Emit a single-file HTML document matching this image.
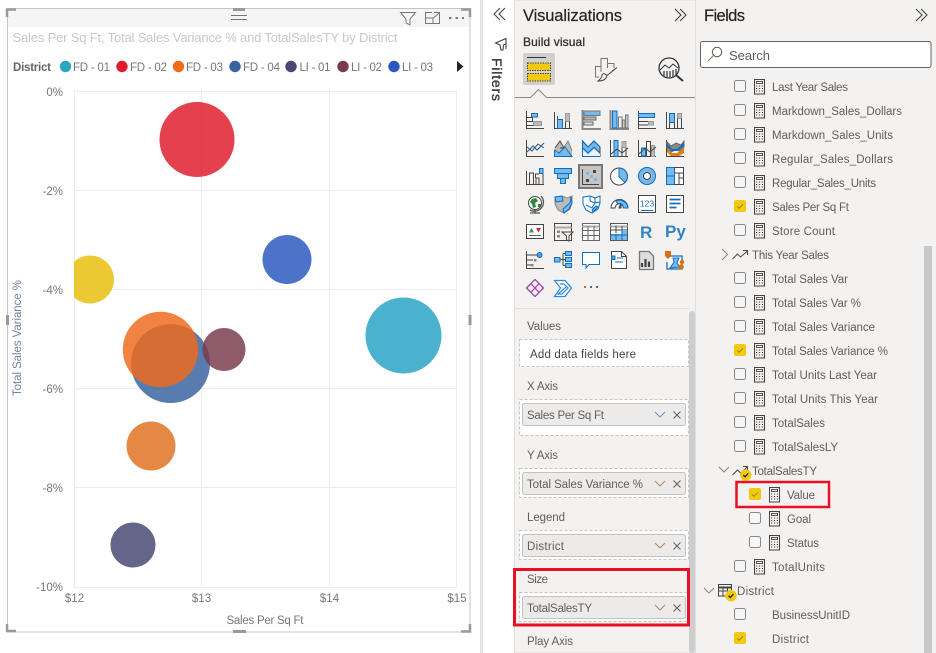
<!DOCTYPE html>
<html><head><meta charset="utf-8">
<style>
html,body{margin:0;padding:0;width:936px;height:653px;overflow:hidden;background:#fff}
svg{display:block;font-family:"Liberation Sans",sans-serif}
.f{font-size:11.5px;fill:#605e5c}
.l{font-size:11.5px;fill:#605e5c}
.t{font-size:11.5px;fill:#777}
.h{font-size:16.5px;fill:#252423;stroke:#252423;stroke-width:.2px}
</style></head><body>
<svg width="936" height="653" viewBox="0 0 936 653" xmlns="http://www.w3.org/2000/svg">
<defs>
<g id="calc" fill="none" stroke="#444"><rect x=".5" y=".5" width="10" height="14.5"/><rect x="2.500" y="2.500" width="6" height="2" stroke-width=".9"/><path d="M2 7h1.200M4.900 7h1.200M7.800 7h1.200M2 9.500h1.200M4.900 9.500h1.200M7.800 9.500h1.200M2 12h1.200M4.900 12h1.200M7.800 12h1.200" stroke-width="1.100"/></g>
<rect id="cb" x=".5" y=".5" width="11" height="11" rx="2" fill="#fff" fill-opacity=".35" stroke="#8a8886"/>
<g id="cc"><rect width="12" height="12" rx="2" fill="#f2c811"/><path d="M3 6.300l2 2 4-4" fill="none" stroke="#9a7f10" stroke-width=".9"/></g>
<g id="trend" fill="none" stroke="#444"><path d="M.5 10l5-5 3 3 7-6M11 1.500h4.500V6"/></g>
<path id="chev" d="M0 0l5 5 5-5" fill="none" stroke-width="1.100"/>
<path id="xx" d="M0 0l7 7M7 0l-7 7" fill="none" stroke="#605e5c"/>
<path id="dbl" d="M0 0l6 6-6 6M5 0l6 6-6 6" fill="none" stroke="#444" stroke-width="1.100"/>
<g id="badge"><circle r="5.700" fill="#f2c811"/><path d="M-2.500 0l1.800 1.800 3.200-3.400" fill="none" stroke="#222" stroke-width="1.300"/></g>
</defs>

<rect width="936" height="653" fill="#fff"/>
<!-- visual -->
<rect x="8" y="9" width="462" height="18" fill="#f5f5f5"/>
<rect x="7.500" y="8.500" width="462.500" height="623.500" fill="none" stroke="#c4c4c4"/>
<path d="M7 17V9.500H16M461 9.500H470V17M7 624V631H16M461 631.500H470V624" fill="none" stroke="#9a9a9a" stroke-width="2.500"/>
<path d="M233 9.500H245M233 631.500H246M7.500 315V325M470 315V325" fill="none" stroke="#999" stroke-width="3"/>
<path d="M231 15.500H247M231 19.500H247" stroke="#777" fill="none"/>
<path d="M400.500 12.500H415.500L410 19V25L406 23V19Z" fill="none" stroke="#777"/>
<path d="M432 12.500H425.500V23.500H439.500V17M425.500 18H433V23.500M434 12.500H439.500V18M439 13L433.500 18" fill="none" stroke="#777"/>
<path d="M449 18h2.500M455.500 18h2.500M462 18h2" stroke="#666" stroke-width="1.800" fill="none"/>
<text x="12.500" y="42" font-size="13" fill="#c8c8c8" textLength="385" lengthAdjust="spacing">Sales Per Sq Ft, Total Sales Variance % and TotalSalesTY by District</text>

<text x="13" y="71" font-size="11.5" font-weight="700" fill="#666" textLength="38">District</text>
<circle cx="65.500" cy="66.500" r="5.700" fill="#2aa5c3"/><text class="t" x="73" y="71" textLength="37">FD - 01</text>
<circle cx="122" cy="66.500" r="5.700" fill="#df1c2b"/><text class="t" x="130" y="71" textLength="37">FD - 02</text>
<circle cx="178.500" cy="66.500" r="5.700" fill="#f06b1d"/><text class="t" x="186" y="71" textLength="37">FD - 03</text>
<circle cx="235" cy="66.500" r="5.700" fill="#38639f"/><text class="t" x="243" y="71" textLength="37">FD - 04</text>
<circle cx="291" cy="66.500" r="5.700" fill="#474774"/><text class="t" x="299.500" y="71" textLength="31">LI - 01</text>
<circle cx="343" cy="66.500" r="5.700" fill="#7a3a4c"/><text class="t" x="351" y="71" textLength="31">LI - 02</text>
<circle cx="394" cy="66.500" r="5.700" fill="#2b57bf"/><text class="t" x="402" y="71" textLength="31">LI - 03</text>
<path d="M457 61L463.500 66.500L457 72Z" fill="#252423"/>

<!-- grid -->
<path d="M74.500 90V587.500M201.500 90V587.500M329.500 90V587.500M456.500 90V587.500M74 91.500H457M74 190.500H457M74 289.500H457M74 388.500H457M74 487.500H457M74 587.500H457" stroke="#ececec" fill="none"/>
<g text-anchor="end" class="t">
<text class="t" x="63" y="96">0%</text><text class="t" x="63" y="195">-2%</text><text class="t" x="63" y="294">-4%</text><text class="t" x="63" y="393">-6%</text><text class="t" x="63" y="492">-8%</text><text class="t" x="63" y="591">-10%</text>
</g>
<g text-anchor="middle">
<text class="t" x="74.500" y="602">$12</text><text class="t" x="201.500" y="602">$13</text><text class="t" x="329.500" y="602">$14</text><text class="t" x="457" y="602">$15</text>
<text class="t" x="265" y="624" textLength="77">Sales Per Sq Ft</text>
<text class="t" x="0" y="0" transform="translate(21 338) rotate(-90)" textLength="116" style="fill:#6f82a0">Total Sales Variance %</text>
</g>
<!-- bubbles -->
<clipPath id="pl"><rect x="74" y="85" width="390" height="510"/></clipPath>
<g clip-path="url(#pl)" fill-opacity=".84">
<circle cx="197" cy="139.500" r="37.500" fill="#df1c2b"/>
<circle cx="403.500" cy="335.500" r="38" fill="#2aa5c3" fill-opacity=".85"/>
<circle cx="287" cy="259.500" r="24.500" fill="#2b57bf"/>
<circle cx="90" cy="279.500" r="24" fill="#eac31c" fill-opacity=".9"/>
<circle cx="170.500" cy="363.500" r="39.500" fill="#38639f"/>
<circle cx="160.500" cy="349.500" r="37.700" fill="#ee6a1e"/>
<circle cx="224" cy="349.500" r="21.500" fill="#7a3a4c"/>
<circle cx="151" cy="446" r="24.500" fill="#df711f"/>
<circle cx="133" cy="545" r="22.500" fill="#474774"/>
</g>

<!-- filter pane -->
<rect x="480" y="0" width="3" height="653" fill="#e6e6e6"/>
<use href="#dbl" transform="translate(505 8) scale(-1 1)"/>
<path d="M506 38.500L495.500 43L500 45L501 50L503 50L503.500 45L506 43.500ZM506 38.500V49" fill="none" stroke="#333"/>
<text transform="translate(492 58) rotate(90)" font-size="14" fill="#3b3a39" stroke="#3b3a39" stroke-width=".35" textLength="43">Filters</text>

<!-- viz pane -->
<rect x="514.500" y="0" width="181" height="653" fill="#f3f2f1" stroke="#e1dfdd"/>
<rect x="696" y="0" width="240" height="653" fill="#f3f2f1"/>
<text class="h" x="523" y="21" textLength="99">Visualizations</text>
<use href="#dbl" transform="translate(675 9)"/>
<text x="523" y="46" font-size="12" fill="#323130" stroke="#323130" stroke-width=".3" textLength="62">Build visual</text>
<rect x="523" y="53" width="32" height="32" rx="2" fill="#d2d0ce"/>
<path d="M527 57.500H546" stroke="#333" fill="none"/>
<rect x="527.500" y="63" width="23" height="7.500" fill="#f2c811" stroke="#444" stroke-dasharray="1.500 1"/>
<rect x="527.500" y="73.500" width="23" height="7.500" fill="#f2c811" stroke="#444" stroke-dasharray="1.500 1"/>
<path d="M599 77H595.500V66.500H601V58.500H607.500V63.500H614V68M601 66.500V72M607.500 63.500V68" fill="none" stroke="#777"/>
<path d="M617 67.500L607 75.500L604 73.500M607 75.500Q606 81 598 81Q602 78 602 75Q604 73 604 73.500M617 67.500L612 71" fill="#f3f2f1" stroke="#444"/>
<circle cx="669" cy="68" r="10" fill="none" stroke="#333" stroke-width="1.300"/>
<path d="M660 70L665 65L669 68L673 64L678 68" fill="none" stroke="#333"/>
<path d="M664 77V71M667 78V71M670 78V71M673 78V70M676 75V69" stroke="#555" stroke-width="1.500" fill="none"/>
<path d="M676 75L683 81" stroke="#333" stroke-width="2" fill="none"/>
<path d="M515 97.500H530.500L538.500 89.500L546.500 97.500H695" fill="none" stroke="#8a8886"/>

<!-- viz icons -->
<g fill="none" stroke="#444">
<!-- row 1 -->
<g transform="translate(526 111)"><path d="M.5 0V17.500H18"/><rect x="5.500" y="2.500" width="6" height="3.500" fill="#76b9ed" stroke="#106ebe"/><path d="M.5 6.500H6.500V10.500H.5M.5 10.500H7.500"/><rect x="7.500" y="10.500" width="8" height="4" fill="#bbb" stroke="#999"/><path d="M.5 14.500H7.500"/></g>
<g transform="translate(554 111)"><path d="M.5 1V17.500H18"/><rect x="3.500" y="8.500" width="5" height="9" fill="#76b9ed" stroke="#106ebe"/><rect x="11.500" y="2.500" width="4" height="8" fill="#bbb" stroke="#999"/><path d="M3.500 8V5M11.500 17V10.500M15.500 10.500V17"/></g>
<g transform="translate(582 110)"><path d="M.5 0V19H19" stroke="#888" stroke-width="2"/><rect x="2" y="1" width="16" height="4.500" fill="#76b9ed" stroke="#777"/><rect x="2" y="7" width="12" height="3" fill="#bbb" stroke="#666"/><rect x="2" y="12" width="9" height="3" fill="#ddd" stroke="#666"/></g>
<g transform="translate(610 110)"><path d="M.5 0V19H19" stroke="#888" stroke-width="2"/><rect x="2.500" y="1" width="4.500" height="17" fill="#76b9ed" stroke="#106ebe"/><rect x="8.500" y="7" width="3.500" height="11" stroke="#777"/><rect x="12.500" y="10" width="2.500" height="8" fill="#ccc" stroke="#777"/><rect x="15.500" y="5" width="2.500" height="13" fill="#ccc" stroke="#777"/></g>
<g transform="translate(638 111)"><path d="M.5 0V18M.5 17.500H18"/><rect x=".5" y="2.500" width="16" height="4" fill="#76b9ed" stroke="#106ebe"/><path d="M.5 6.500V10.500H10"/><rect x="10.500" y="10.500" width="5" height="3.500" fill="#bbb" stroke="#999"/><path d="M.5 14H10"/></g>
<g transform="translate(666 111)"><path d="M.5 1V17.500H18"/><rect x="3.500" y="2.500" width="5" height="9" fill="#76b9ed" stroke="#106ebe"/><rect x="11.500" y="2.500" width="4" height="5" fill="#bbb" stroke="#999"/><path d="M3.500 11.500V17M8.500 11.500V17M11.500 7.500V17M15.500 7.500V17"/></g>
<!-- row 2 -->
<g transform="translate(526 139)"><path d="M.5 1V17.500H18"/><path d="M1 13L7 7L11 11L18 4" stroke="#106ebe" stroke-width="1.200"/><path d="M1 8L6 12L12 5L18 9" stroke="#555"/></g>
<g transform="translate(554 139)"><path d="M1 10L6 2L10 8L14 1L18 10V17H1Z" fill="#bbb" stroke="#888" stroke-opacity="0"/><path d="M1 9L6 2L10 9L6 9"/><path d="M10 8L14 2L18 12" stroke="#888"/><path d="M.5 17.500V11L5 14L11 8L18 17.500Z" fill="#76b9ed" stroke="#106ebe"/></g>
<g transform="translate(582 139)"><path d="M.5 2L6 8L12 2L18 8V17.500H.5Z" fill="#76b9ed"/><path d="M.5 17.500H18" stroke="#106ebe"/><path d="M.5 1V17.500" stroke="#106ebe"/><path d="M.5 2L6 8L12 2L18 8" stroke="#106ebe"/><path d="M1 9L6 14L12 8L18 14" stroke="#106ebe"/><path d="M1 11L6 15.500L12 10L18 15V17H1Z" fill="#f3f2f1" stroke="none"/></g>
<g transform="translate(610 139)"><path d="M.5 1V17.500H18"/><rect x="4" y="1.500" width="4" height="16" fill="#76b9ed" stroke="#106ebe"/><rect x="12" y="2.500" width="4" height="6" fill="#bbb" stroke="#999"/><path d="M12 8.500V17M16 8.500V17M1 15L7 10L12 14L18 9"/></g>
<g transform="translate(638 139)"><path d="M.5 1V17.500H18"/><rect x="3.500" y="9" width="4" height="8" fill="#76b9ed" stroke="#106ebe"/><rect x="8.500" y="2.500" width="4" height="15"/><rect x="13.500" y="6.500" width="3" height="11" fill="#bbb" stroke="#999"/><path d="M1 15L7 9L12 13L18 8"/></g>
<g transform="translate(666 139)"><path d="M.5 1V17.500H18"/><path d="M1 3L5 7L10 4L15 6L18 2V8L14 12L9 11L5 13L1 9Z" fill="#888" stroke="#666"/><path d="M1 9L6 14L11 14L14 12L18 8V14L13 17H5L1 13Z" fill="#e07b1a" stroke="none"/><path d="M1 6L6 11L11 11L14 9L18 5" stroke="#106ebe" stroke-width="2"/></g>
<!-- row 3 -->
<g transform="translate(526 167)"><path d="M.5 4V17.500H18"/><path d="M3.500 17V6H7.500V17M10 17V11H13V17"/><rect x="13.500" y="1.500" width="3.500" height="5" fill="#76b9ed" stroke="#106ebe"/><path d="M13 7H9.500V11M17 7V17.500" /></g>
<g transform="translate(554 167)" stroke="#106ebe" fill="#76b9ed"><rect x=".5" y="1.500" width="17" height="5"/><rect x="3.500" y="6.500" width="11" height="5"/><rect x="6.500" y="11.500" width="5" height="5"/></g>
<g transform="translate(578 164)"><rect x="1" y="1" width="23" height="23" fill="#c8c6c4" stroke="#777" stroke-width="2"/><path d="M4.500 5V20.500H21" stroke="#444"/><g stroke="none"><rect x="8" y="8" width="3" height="3" fill="#76b9ed"/><rect x="15" y="6" width="3" height="3" fill="#444"/><rect x="12" y="11" width="3" height="3" fill="#76b9ed"/><rect x="16" y="14" width="3" height="3" fill="#76b9ed"/><rect x="8" y="15" width="3" height="3" fill="#444"/></g></g>
<g transform="translate(610 167)"><circle cx="9" cy="9.500" r="8.500" fill="#fff"/><path d="M9 9.500V1A8.500 8.500 0 0 1 15 15.500Z" fill="#76b9ed" stroke="#106ebe"/></g>
<g transform="translate(638 167)"><circle cx="9" cy="9" r="6" fill="none" stroke="#76b9ed" stroke-width="5"/><circle cx="9" cy="9" r="8.500" stroke="#106ebe"/><circle cx="9" cy="9" r="3.500" fill="#fff" stroke="#444"/></g>
<g transform="translate(666 167)"><rect x=".5" y=".5" width="17" height="17" fill="#fff"/><rect x=".5" y=".5" width="8" height="17" fill="#76b9ed" stroke="#106ebe"/><path d="M.5 9H8.500"  stroke="#106ebe"/><path d="M8.500 6H17.500M13 6V17.500M13 11H17.500"/></g>
<!-- row 4 -->
<g transform="translate(527 195)"><circle cx="8" cy="8" r="6.500" fill="#fff"/><path d="M5 4L9 3L11 6L8 8L9 12L6 13L5 9L3 7Z" fill="#2a8a3a" stroke="none"/><path d="M11 9L14 9L13 12L11 12Z" fill="#2a8a3a" stroke="none"/><path d="M14 1A9 9 0 0 1 3 15M3 18H13M8 15V18" stroke="#555" stroke-width="1.300"/></g>
<g transform="translate(554 195)"><path d="M1 2L8 1L13 3L18 1V8L16 14L10 18L4 15L1 9Z" fill="#bbb" stroke="#888"/><path d="M1 2L8 1L9 6L2 7Z" fill="#76b9ed" stroke="#106ebe"/><path d="M9 14L16 8L17 2L18 8L15 14L10 18Z" fill="#76b9ed" stroke="#106ebe"/></g>
<g transform="translate(582 195)" stroke="#106ebe"><path d="M1 2L8 1L13 3L18 1V8L16 14L10 18L4 15L1 9Z" fill="#fff"/><path d="M8 1V6L13 8L10 13L4 10M13 3V8L18 7" /><path d="M11 17L16 12L14 11L10 15Z" fill="#76b9ed"/></g>
<g transform="translate(610 195)"><path d="M1 13A8.500 8.500 0 0 1 18 13H13.500A4 4 0 0 0 5 13Z" fill="#fff"/><path d="M6 6A8.500 8.500 0 0 1 18 13H13.500A4 4 0 0 0 8 9Z" fill="#76b9ed" stroke="#106ebe"/><path d="M9 13L11 8L11 13Z" fill="#444"/></g>
<g transform="translate(638 195)"><rect x=".5" y=".5" width="17" height="17" fill="#fff"/><path d="M3 15.500H15" stroke="#106ebe"/><text x="9" y="11.500" text-anchor="middle" font-size="8.500" fill="#106ebe" stroke="none">123</text></g>
<g transform="translate(666 195)"><rect x=".5" y=".5" width="17" height="17" fill="#fff"/><path d="M3.500 4.500H14.500M3.500 8.500H14.500M3.500 12.500H10.500" stroke="#106ebe" stroke-width="1.800"/></g>
<!-- row 5 -->
<g transform="translate(526 223)"><rect x=".5" y="1.500" width="17" height="14" fill="#fff"/><path d="M3 9.500L5.500 5L8 9.500Z" fill="#3a9a4a" stroke="none"/><path d="M10 5H15L12.500 9.500Z" fill="#d8262e" stroke="none"/><path d="M3 12.500H15" stroke="#666"/></g>
<g transform="translate(554 223)"><rect x=".5" y=".5" width="17" height="17"/><path d="M.5 4.500H17.500" stroke-width="2" stroke="#aaa"/><rect x="3" y="7.500" width="3" height="2.500" fill="#888" stroke="none"/><rect x="3" y="12" width="3" height="2.500" fill="#888" stroke="none"/><path d="M8 9H19L15 13V18L12.500 17V13Z" fill="#f3f2f1"/></g>
<g transform="translate(582 223)" stroke="#666"><rect x=".5" y=".5" width="17" height="17" fill="#fff"/><path d="M.5 3.500H17.500" stroke="#aaa" stroke-width="2"/><path d="M.5 7.500H17.500M.5 12.500H17.500M6 3V17.500M12 3V17.500"/></g>
<g transform="translate(610 223)"><rect x=".5" y=".5" width="17" height="17" fill="#fff" stroke="#555"/><path d="M.5 3.500H17.500" stroke="#aaa" stroke-width="2"/><path d="M.5 7H17.500M6 3V10M12 3V10"/><rect x="1" y="11" width="16" height="6" fill="#76b9ed" stroke="none"/><rect x="12" y="7" width="5" height="5" fill="#76b9ed" stroke="none"/><path d="M6 11V17M12 7V17M1 12H17" stroke="#106ebe"/></g>
<text x="640" y="238" font-size="17" font-weight="700" fill="#2f85c4" stroke="none">R</text>
<text x="665" y="237" font-size="17" font-weight="700" fill="#2f85c4" stroke="none">Py</text>
<!-- row 6 -->
<g transform="translate(526 251)"><path d="M.5 0V17.500H18M.5 4H11M.5 9H7M.5 14H5"/><circle cx="13.500" cy="4" r="2.500" fill="#4a9ede" stroke="#106ebe"/><rect x="8" y="8" width="2.500" height="2.500" fill="#888" stroke="none"/><rect x="5" y="13" width="2.500" height="2.500" fill="#888" stroke="none"/></g>
<g transform="translate(554 251)" stroke="#106ebe"><rect x=".5" y="6.500" width="5.500" height="4.500" fill="#76b9ed"/><rect x="11.500" y=".5" width="6" height="4" fill="#76b9ed"/><rect x="11.500" y="6.500" width="6" height="4" fill="#76b9ed"/><rect x="11.500" y="12.500" width="6" height="4" fill="#76b9ed"/><path d="M6 8.500H11.500M9 2.500V14.500M9 2.500H11.500M9 14.500H11.500" stroke="#444"/></g>
<g transform="translate(581 251)" stroke="#106ebe"><path d="M1.500 1.500H18.500V13.500H8L5 17V13.500H1.500Z" fill="#fff"/></g>
<g transform="translate(611 251)"><path d="M.5 .5H10.500L15.500 5.500V17.500H.5Z" fill="#fff"/><path d="M10.500 .5V5.500H15.500"/><rect x=".5" y="5" width="3.500" height="3.500" fill="#4a9ede" stroke="#106ebe"/><path d="M6 7H12M4 11H12" stroke="#106ebe"/></g>
<g transform="translate(639 251)"><path d="M.5 .5H10L14.500 5V18.500H.5Z" fill="#ddd" stroke="#777" stroke-width="1.300"/><path d="M3 16V12M6.500 16V8M10 16V10.500" stroke="#444" stroke-width="2.200"/></g>
<g transform="translate(665 250)"><path d="M5 6H17V19H2V12" stroke="#106ebe" fill="#fff" stroke-width="1.300"/><path d="M5 18L9 12L8 8H14L12 13L15 17Z" fill="#76b9ed" stroke="#106ebe"/><path d="M0 1H6V6L3 9L0 6Z" fill="#d96f0a" stroke="none"/><circle cx="17" cy="12" r="2.200" fill="#d96f0a" stroke="none"/><circle cx="16" cy="17" r="2.700" fill="#d96f0a" stroke="none"/></g>
<!-- row 7 -->
<g transform="translate(526 279)" stroke="#a04aa8" stroke-width="1.300"><path d="M9 .5L17.500 9L9 17.500L.5 9Z M9 .5L5 4.500L9 9L13 4.500ZM9 9L5 13.500L9 17.500L13 13.500Z" fill="#f3e5f5" stroke-linejoin="round"/></g>
<g transform="translate(554 279)" stroke="#2a8bdc" stroke-width="1.200"><path d="M.5 1.500H11L17.500 9L11 17.500H.5L6.500 9Z" fill="#fff"/><path d="M6 5H10L14 9L8 15H4L12 8" /></g>
</g>
<path d="M584 287h2" stroke="#c0701c" stroke-width="2"/><path d="M590 287h2" stroke="#46699a" stroke-width="2"/><path d="M596 287h2" stroke="#46699a" stroke-width="2"/>

<path d="M515 308.500H689" stroke="#e1dfdd" fill="none"/>
<rect x="689" y="311" width="6" height="342" rx="3" fill="#cdcdcd"/>

<!-- wells -->
<text class="l" x="527" y="330" textLength="34">Values</text>
<rect x="519.500" y="339.500" width="169" height="27" fill="#fff" stroke="#c8c6c4" stroke-dasharray="3 2"/>
<text class="l" x="530" y="358" textLength="106" style="fill:#444">Add data fields here</text>

<text class="l" x="527" y="390" textLength="31">X Axis</text>
<rect x="519.500" y="399.500" width="169" height="36" fill="#fff" stroke="#c8c6c4" stroke-dasharray="3 2"/>
<rect x="522.500" y="403.500" width="163" height="22" rx="2" fill="#edebe9" stroke="#c4c2c0"/>
<text class="l" x="527" y="419" textLength="77">Sales Per Sq Ft</text>
<use href="#chev" transform="translate(655 412)" stroke="#6b93bb"/><use href="#xx" transform="translate(673.500 411.500)"/>

<text class="l" x="527" y="459" textLength="31">Y Axis</text>
<rect x="519.500" y="468.500" width="169" height="29" fill="#fff" stroke="#c8c6c4" stroke-dasharray="3 2"/>
<rect x="522.500" y="472.500" width="163" height="22" rx="2" fill="#edebe9" stroke="#c4c2c0"/>
<text class="l" x="527" y="488" textLength="116">Total Sales Variance %</text>
<use href="#chev" transform="translate(655 481)" stroke="#ac8a6c"/><use href="#xx" transform="translate(673.500 480.500)"/>

<text class="l" x="527" y="521" textLength="38">Legend</text>
<rect x="519.500" y="530.500" width="169" height="29" fill="#fff" stroke="#c8c6c4" stroke-dasharray="3 2"/>
<rect x="522.500" y="534.500" width="163" height="22" rx="2" fill="#edebe9" stroke="#c4c2c0"/>
<text class="l" x="527" y="550" textLength="37">District</text>
<use href="#chev" transform="translate(655 543)" stroke="#ac8a6c"/><use href="#xx" transform="translate(673.500 542.500)"/>

<text class="l" x="527" y="583" textLength="21">Size</text>
<rect x="519.500" y="592.500" width="169" height="29" fill="#fff" stroke="#c8c6c4" stroke-dasharray="3 2"/>
<rect x="522.500" y="596.500" width="163" height="22" rx="2" fill="#edebe9" stroke="#c4c2c0"/>
<text class="l" x="527" y="612" textLength="65">TotalSalesTY</text>
<use href="#chev" transform="translate(655 605)" stroke="#ac8a6c"/><use href="#xx" transform="translate(673.500 604.500)"/>
<rect x="514.500" y="569.500" width="174" height="55.500" fill="none" stroke="#e81123" stroke-width="3"/>

<text class="l" x="527" y="645" textLength="46">Play Axis</text>

<!-- fields pane -->
<text class="h" x="704" y="21" textLength="41">Fields</text>
<use href="#dbl" transform="translate(916 9)"/>
<rect x="700.500" y="41.500" width="230.500" height="26" rx="2" fill="#fff" stroke="#666"/>
<circle cx="717" cy="52" r="4.700" fill="none" stroke="#555"/><path d="M713.500 55.500L708 61" stroke="#a5764a" fill="none" stroke-width="1.200"/>
<text x="729" y="60" font-size="13" fill="#605e5c" textLength="41">Search</text>
<rect x="924" y="246" width="8" height="407" fill="#c8c8c8"/>

<!-- field rows -->
<use href="#cb" x="734" y="80"/><use href="#calc" x="754" y="79"/><text class="f" x="772" y="91" textLength="76">Last Year Sales</text>
<use href="#cb" x="734" y="104"/><use href="#calc" x="754" y="103"/><text class="f" x="772" y="115" textLength="130">Markdown_Sales_Dollars</text>
<use href="#cb" x="734" y="128"/><use href="#calc" x="754" y="127"/><text class="f" x="772" y="139" textLength="121">Markdown_Sales_Units</text>
<use href="#cb" x="734" y="152"/><use href="#calc" x="754" y="151"/><text class="f" x="772" y="163" textLength="121">Regular_Sales_Dollars</text>
<use href="#cb" x="734" y="176"/><use href="#calc" x="754" y="175"/><text class="f" x="772" y="187" textLength="104">Regular_Sales_Units</text>
<use href="#cc" x="734" y="200"/><use href="#calc" x="754" y="199"/><text class="f" x="772" y="211" textLength="77">Sales Per Sq Ft</text>
<use href="#cb" x="734" y="224"/><use href="#calc" x="754" y="223"/><text class="f" x="772" y="235" textLength="63">Store Count</text>
<path d="M722 249L727.500 254.500L722 260" fill="none" stroke="#8a8886"/><use href="#trend" x="732" y="249"/><text class="f" x="752" y="259" textLength="77">This Year Sales</text>
<use href="#cb" x="734" y="272"/><use href="#calc" x="754" y="271"/><text class="f" x="772" y="283" textLength="76">Total Sales Var</text>
<use href="#cb" x="734" y="296"/><use href="#calc" x="754" y="295"/><text class="f" x="772" y="307" textLength="89">Total Sales Var %</text>
<use href="#cb" x="734" y="320"/><use href="#calc" x="754" y="319"/><text class="f" x="772" y="331" textLength="103">Total Sales Variance</text>
<use href="#cc" x="734" y="344"/><use href="#calc" x="754" y="343"/><text class="f" x="772" y="355" textLength="116">Total Sales Variance %</text>
<use href="#cb" x="734" y="368"/><use href="#calc" x="754" y="367"/><text class="f" x="772" y="379" textLength="105">Total Units Last Year</text>
<use href="#cb" x="734" y="392"/><use href="#calc" x="754" y="391"/><text class="f" x="772" y="403" textLength="106">Total Units This Year</text>
<use href="#cb" x="734" y="416"/><use href="#calc" x="754" y="415"/><text class="f" x="772" y="427" textLength="53">TotalSales</text>
<use href="#cb" x="734" y="440"/><use href="#calc" x="754" y="439"/><text class="f" x="772" y="451" textLength="66">TotalSalesLY</text>
<use href="#chev" transform="translate(719 467)" stroke="#8a8886"/><use href="#trend" x="732" y="465"/><text class="f" x="752" y="475" textLength="65">TotalSalesTY</text>
<use href="#badge" x="745.700" y="475"/>
<use href="#cc" x="749" y="488"/><use href="#calc" x="769" y="487"/><text class="f" x="787" y="499" textLength="28">Value</text>
<rect x="736.500" y="482" width="92.500" height="25" fill="none" stroke="#e81123" stroke-width="2.500"/>
<use href="#cb" x="749" y="512"/><use href="#calc" x="769" y="511"/><text class="f" x="787" y="523" textLength="24">Goal</text>
<use href="#cb" x="749" y="536"/><use href="#calc" x="769" y="535"/><text class="f" x="787" y="547" textLength="32">Status</text>
<use href="#cb" x="734" y="560"/><use href="#calc" x="754" y="559"/><text class="f" x="772" y="571" textLength="53">TotalUnits</text>
<use href="#chev" transform="translate(704 588)" stroke="#8a8886"/>
<g fill="none" stroke="#444"><rect x="718.500" y="584.500" width="13" height="11.500"/><path d="M718.500 587.500H731.500" stroke-width="2"/><path d="M718.500 591H731.500M723 587V596M727.500 587V596"/></g>
<use href="#badge" x="731" y="595.700"/>
<text class="f" x="737" y="595" textLength="37">District</text>
<use href="#cb" x="734" y="608"/><text class="f" x="772" y="619" textLength="78">BusinessUnitID</text>
<use href="#cc" x="734" y="632"/><text class="f" x="772" y="643" textLength="37">District</text>
</svg>
</body></html>
